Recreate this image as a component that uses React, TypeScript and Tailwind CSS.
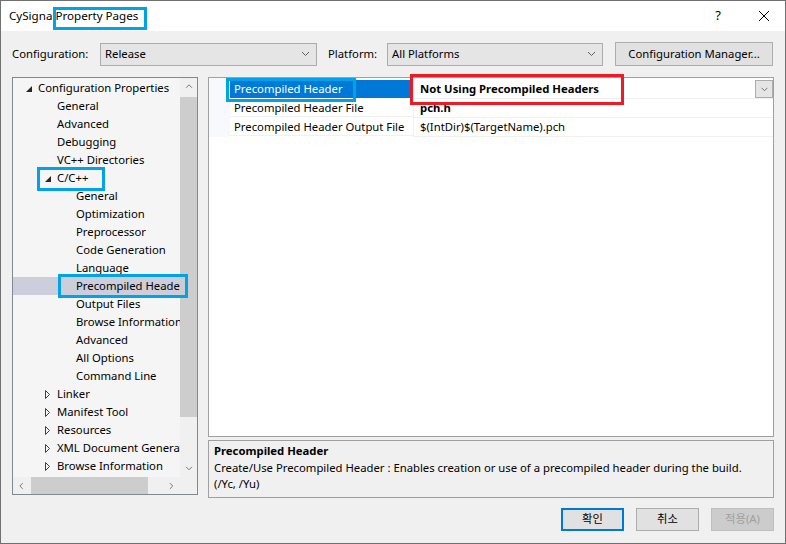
import React from 'react';

type Node = { label: string; level: 0 | 1 | 2; arrow?: 'open' | 'closed'; selected?: boolean };

const tree: Node[] = [
  { label: 'Configuration Properties', level: 0, arrow: 'open' },
  { label: 'General', level: 1 },
  { label: 'Advanced', level: 1 },
  { label: 'Debugging', level: 1 },
  { label: 'VC++ Directories', level: 1 },
  { label: 'C/C++', level: 1, arrow: 'open' },
  { label: 'General', level: 2 },
  { label: 'Optimization', level: 2 },
  { label: 'Preprocessor', level: 2 },
  { label: 'Code Generation', level: 2 },
  { label: 'Language', level: 2 },
  { label: 'Precompiled Headers', level: 2, selected: true },
  { label: 'Output Files', level: 2 },
  { label: 'Browse Information', level: 2 },
  { label: 'Advanced', level: 2 },
  { label: 'All Options', level: 2 },
  { label: 'Command Line', level: 2 },
  { label: 'Linker', level: 1, arrow: 'closed' },
  { label: 'Manifest Tool', level: 1, arrow: 'closed' },
  { label: 'Resources', level: 1, arrow: 'closed' },
  { label: 'XML Document Generator', level: 1, arrow: 'closed' },
  { label: 'Browse Information', level: 1, arrow: 'closed' },
];

const indent = { 0: 'pl-[12px]', 1: 'pl-[31px]', 2: 'pl-[50px]' };

const props = [
  { name: 'Precompiled Header', value: 'Not Using Precompiled Headers', bold: true, selected: true },
  { name: 'Precompiled Header File', value: 'pch.h', bold: true },
  { name: 'Precompiled Header Output File', value: '$(IntDir)$(TargetName).pch' },
];

function Chevron({ dir = 'down', className = '' }: { dir?: 'down' | 'up' | 'left' | 'right'; className?: string }) {
  const d = {
    down: 'M1 1 L4.5 4.5 L8 1',
    up: 'M1 4.5 L4.5 1 L8 4.5',
    left: 'M4.5 1 L1 4.5 L4.5 8',
    right: 'M1 1 L4.5 4.5 L1 8',
  }[dir];
  const box = dir === 'down' || dir === 'up' ? '0 0 9 6' : '0 0 6 9';
  return (
    <svg viewBox={box} className={className} fill="none" stroke="currentColor">
      <path d={d} />
    </svg>
  );
}

function Combo({ value, width }: { value: string; width: string }) {
  return (
    <div className={`${width} h-[23px] bg-[#e5e5e5] border border-[#acacac] flex items-center pl-[4px] pr-[6px]`}>
      <span className="flex-1 pt-[1px]">{value}</span>
      <Chevron className="w-[9px] h-[6px] text-[#606060]" />
    </div>
  );
}

function Arrow({ kind }: { kind?: 'open' | 'closed' }) {
  if (kind === 'open')
    return (
      <svg viewBox="0 0 6 6" className="w-[6px] h-[6px] ml-[1px] mt-[2px]">
        <path d="M6 0 L6 6 L0 6 Z" fill="#262626" />
      </svg>
    );
  if (kind === 'closed')
    return (
      <svg viewBox="0 0 5 9" className="w-[5px] h-[9px] ml-[1px]">
        <path d="M0.5 0.5 L4.5 4.5 L0.5 8.5 Z" fill="none" stroke="#404040" />
      </svg>
    );
  return null;
}

export default function App() {
  return (
    <div className="relative w-[786px] h-[544px] border border-[#707070] bg-[#f0f0f0] flex flex-col text-[11.3px] text-black font-['Noto_Sans','Noto_Sans_CJK_KR',sans-serif] overflow-hidden">
      {/* Title bar */}
      <div className="h-[30px] bg-white flex items-center pl-[8px] pr-[16px] shrink-0 text-[11.6px]">
        <span className="flex-1">CySigna Property Pages</span>
        <span className="mr-[38px] text-[13px]">?</span>
        <svg viewBox="0 0 10 10" className="w-[10px] h-[10px]" stroke="#000" strokeWidth="1">
          <path d="M0 0 L10 10 M10 0 L0 10" />
        </svg>
      </div>

      <div className="flex-1 flex flex-col px-[11px]">
        {/* Configuration row */}
        <div className="flex items-center h-[24px] mt-[11px]">
          <span className="w-[88px] pt-[1px]">Configuration:</span>
          <Combo value="Release" width="w-[217px]" />
          <span className="ml-[11px] w-[59px] pt-[1px]">Platform:</span>
          <Combo value="All Platforms" width="w-[216px]" />
          <div className="ml-[12px] w-[158px] h-[24px] bg-[#e1e1e1] border border-[#adadad] flex items-center justify-center pt-[1px]">
            Configuration Manager...
          </div>
        </div>

        {/* Main area */}
        <div className="flex mt-[11px] gap-[10px]">
          {/* Tree */}
          <div className="w-[186px] h-[418px] border border-[#828790] bg-[#f5f5f5] flex flex-col">
            <div className="flex h-[399px]">
              <div className="flex-1 overflow-hidden pt-[1px]">
                {tree.map((n, i) => (
                  <div
                    key={i}
                    className={`h-[18px] flex items-center whitespace-nowrap ${indent[n.level]} ${n.selected ? 'bg-[#cccedb]' : ''}`}
                  >
                    <span className="w-[13px] shrink-0 flex items-center">
                      <Arrow kind={n.arrow} />
                    </span>
                    <span>{n.label}</span>
                  </div>
                ))}
              </div>
              <div className="w-[17px] bg-[#f0f0f0] flex flex-col items-center">
                <div className="h-[17px] flex items-center justify-center">
                  <Chevron dir="up" className="w-[8px] h-[5px] text-[#606060]" />
                </div>
                <div className="w-full h-[320px] bg-[#cdcdcd] mt-[2px]" />
                <div className="flex-1" />
                <div className="h-[17px] flex items-center justify-center">
                  <Chevron dir="down" className="w-[8px] h-[5px] text-[#606060]" />
                </div>
              </div>
            </div>
            <div className="flex h-[17px] bg-[#f0f0f0]">
              <div className="flex-1 flex items-center">
                <div className="w-[17px] flex justify-center">
                  <Chevron dir="left" className="w-[5px] h-[8px] text-[#606060]" />
                </div>
                <div className="w-[117px] h-full bg-[#cdcdcd] ml-[1px]" />
                <div className="flex-1" />
                <div className="w-[17px] flex justify-center">
                  <Chevron dir="right" className="w-[5px] h-[8px] text-[#606060]" />
                </div>
              </div>
              <div className="w-[17px]" />
            </div>
          </div>

          {/* Right side */}
          <div className="flex-1 flex flex-col gap-[3px]">
            <div className="h-[360px] border border-[#a0a0a0] bg-white flex flex-col">
              <div className="h-[2px] flex">
                <div className="w-[21px] bg-[#f7f9fc]" />
              </div>
              {props.map((p, i) => (
                <div key={i} className="h-[19px] flex">
                  <div className="w-[21px] bg-[#f7f9fc]" />
                  <div
                    className={`w-[183px] h-[18px] flex items-center pl-[4px] pt-[1px] whitespace-nowrap ${p.selected ? 'bg-[#0078d7] text-white' : 'border-b border-[#f0f0f0]'}`}
                  >
                    {p.name}
                  </div>
                  <div className="flex-1 h-[19px] flex border-l border-[#f0f0f0] border-b border-b-[#f0f0f0]">
                    <span className={`flex-1 pl-[6px] flex items-center ${p.bold ? 'font-bold' : ''}`}>{p.value}</span>
                    {p.selected && (
                      <div className="w-[18px] h-[18px] bg-[#e5e5e5] border border-[#acacac] flex items-center justify-center">
                        <Chevron className="w-[9px] h-[5px] text-[#606060]" />
                      </div>
                    )}
                  </div>
                </div>
              ))}
            </div>
            <div className="h-[58px] border border-[#a0a0a0] px-[5px] pt-[1px]">
              <div className="h-[18px] flex items-center font-bold">Precompiled Header</div>
              <div className="leading-[16px]">
                Create/Use Precompiled Header : Enables creation or use of a precompiled header during the build.
                <br />
                (/Yc, /Yu)
              </div>
            </div>
          </div>
        </div>

        {/* Buttons */}
        <div className="flex justify-end gap-[12px] mt-[10px]">
          <div className="w-[63px] h-[23px] bg-[#e1e1e1] border-2 border-[#0078d7] flex items-center justify-center">확인</div>
          <div className="w-[63px] h-[23px] bg-[#e1e1e1] border border-[#adadad] flex items-center justify-center">취소</div>
          <div className="w-[63px] h-[23px] bg-[#cccccc] border border-[#bfbfbf] text-[#a0a0a0] flex items-center justify-center">적용(A)</div>
        </div>
      </div>

      {/* Annotation boxes */}
      <div className="absolute left-[52px] top-[6px] w-[94px] h-[23px] border-[3px] border-[#00a2e8]" />
      <div className="absolute left-[36px] top-[166px] w-[68px] h-[24px] border-[3px] border-[#00a2e8]" />
      <div className="absolute left-[57px] top-[273px] w-[130px] h-[24px] border-[3px] border-[#00a2e8]" />
      <div className="absolute left-[225px] top-[77px] w-[130px] h-[24px] border-[3px] border-[#00a2e8]" />
      <div className="absolute left-[409px] top-[73px] w-[214px] h-[31px] border-[3px] border-[#ed1c24]" />
    </div>
  );
}
